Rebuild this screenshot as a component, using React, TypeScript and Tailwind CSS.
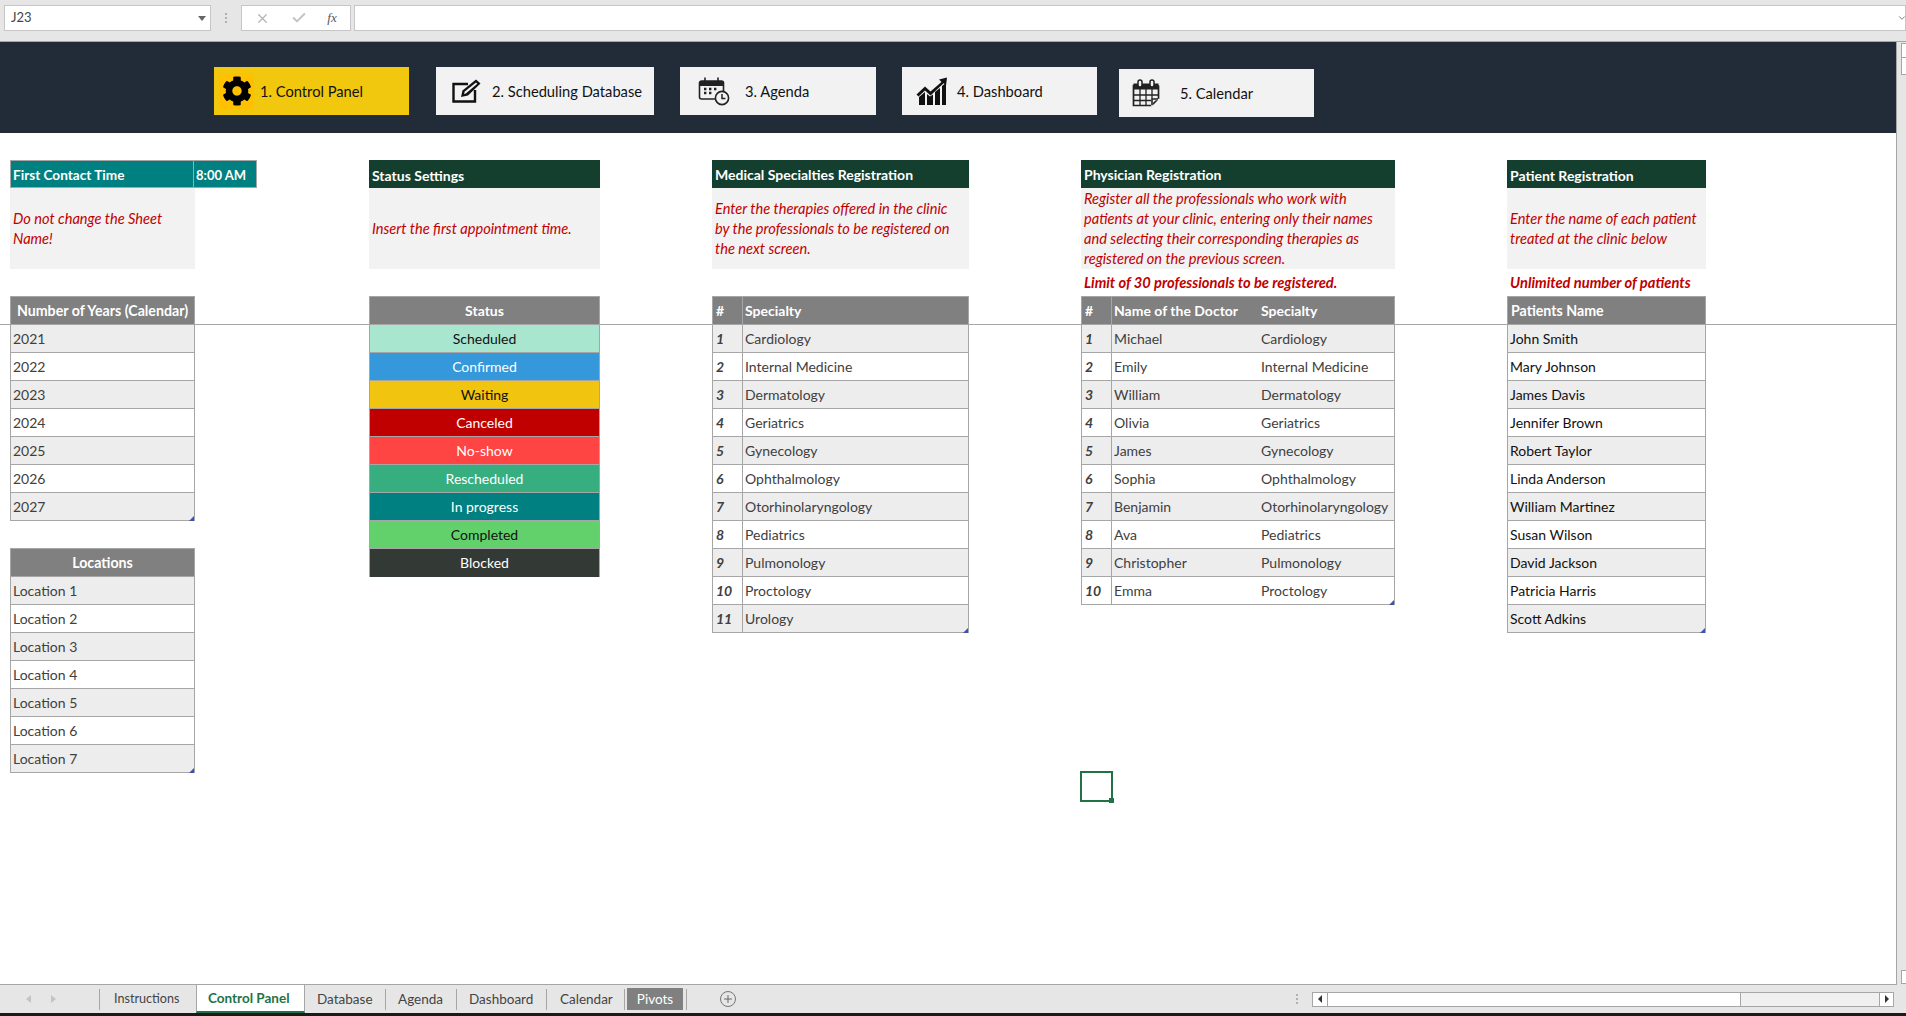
import { FaCog } from "react-icons/fa";
import { ChevronDown, Plus, X, Check } from "lucide-react";

const years = ["2021", "2022", "2023", "2024", "2025", "2026", "2027"];
const locations = ["Location 1", "Location 2", "Location 3", "Location 4", "Location 5", "Location 6", "Location 7"];
const specialties = [
  "Cardiology",
  "Internal Medicine",
  "Dermatology",
  "Geriatrics",
  "Gynecology",
  "Ophthalmology",
  "Otorhinolaryngology",
  "Pediatrics",
  "Pulmonology",
  "Proctology",
  "Urology",
];
const doctors = ["Michael", "Emily", "William", "Olivia", "James", "Sophia", "Benjamin", "Ava", "Christopher", "Emma"];
const patients = [
  "John Smith",
  "Mary Johnson",
  "James Davis",
  "Jennifer Brown",
  "Robert Taylor",
  "Linda Anderson",
  "William Martinez",
  "Susan Wilson",
  "David Jackson",
  "Patricia Harris",
  "Scott Adkins",
];
const statuses = [
  { label: "Scheduled", cls: "bg-[#a8e6cf] text-[#111]" },
  { label: "Confirmed", cls: "bg-[#3498db] text-white" },
  { label: "Waiting", cls: "bg-[#f1c40f] text-[#111]" },
  { label: "Canceled", cls: "bg-[#c00000] text-white" },
  { label: "No-show", cls: "bg-[#ff4444] text-white" },
  { label: "Rescheduled", cls: "bg-[#36ae7f] text-white" },
  { label: "In progress", cls: "bg-[#008080] text-white" },
  { label: "Completed", cls: "bg-[#63d16b] text-[#111]" },
  { label: "Blocked", cls: "bg-[#333a36] text-white" },
];

function EditIcon() {
  return (
    <svg width="29" height="24" viewBox="0 0 29 24" fill="none">
      <path d="M16 5H1.500v17.500h21.500V11" stroke="#111" strokeWidth="2.400" />
      <path d="M9 18l1.500-6.500L24 0.500l4.500 4L16 16.500z" fill="#111" />
      <path d="M12 15.200l0.800-2.700 11.200-9 1.300 1.200-11.200 9.500z" fill="#f2f2f2" />
    </svg>
  );
}

function AgendaIcon() {
  return (
    <svg width="32" height="29" viewBox="0 0 32 29" fill="none">
      <path d="M17 22H3.500a2 2 0 0 1-2-2V6a2 2 0 0 1 2-2h20a2 2 0 0 1 2 2v8" stroke="#222" strokeWidth="1.600" />
      <rect x="2" y="4" width="23" height="5" fill="#222" />
      <path d="M7 0.500v5M20 0.500v5" stroke="#222" strokeWidth="1.600" />
      <path d="M6 12h2.400M11 12h2.400M16 12h2.400M6 16h2.400M11 16h2.400" stroke="#222" strokeWidth="2.400" />
      <circle cx="24" cy="21" r="6.600" fill="#f2f2f2" stroke="#222" strokeWidth="1.600" />
      <path d="M24 17v4.400h3.400" stroke="#222" strokeWidth="1.500" />
    </svg>
  );
}

function ChartIcon() {
  return (
    <svg width="32" height="28" viewBox="0 0 32 28" fill="#111">
      <path d="M3 20l6-5v13H3zM11 17l3 2.600 3-2V28h-6zM19 15l5-4v17h-5zM26 9l4-3v22h-4z" />
      <path d="M0.500 17.500L9 9.500l5.500 5L25.500 5l-2.400-2.500L31 0.500 30 8.500l-2.400-2.300L14.500 18.500 9 13.600 2.500 19.600z" />
    </svg>
  );
}

function CalendarIcon() {
  return (
    <svg width="28" height="28" viewBox="0 0 28 28" fill="none">
      <path d="M26.500 6.500H1.500v20h18M26.500 6.500v13l-7 7" stroke="#222" strokeWidth="1.700" />
      <path d="M1.500 4.500h25v6h-25z" fill="#222" />
      <rect x="6" y="1" width="4" height="7" rx="2" fill="#f2f2f2" stroke="#222" strokeWidth="1.500" />
      <rect x="18" y="1" width="4" height="7" rx="2" fill="#f2f2f2" stroke="#222" strokeWidth="1.500" />
      <path d="M1.500 16h25M1.500 21.500h18M8 10v16.500M14 10v16.500M20 10v16.500" stroke="#222" strokeWidth="1.300" />
      <path d="M20 27v-6.500h7" stroke="#f2f2f2" strokeWidth="1.500" />
      <path d="M20 26v-6h6" stroke="#222" strokeWidth="1.500" />
    </svg>
  );
}

function NavButton({
  icon,
  label,
  iconBox,
  className,
}: {
  icon: React.ReactNode;
  label: string;
  iconBox: string;
  className: string;
}) {
  return (
    <div className={`flex h-[48px] w-[195px] shrink-0 items-center text-[14.700px] text-[#111] ${className}`}>
      <div className={`flex shrink-0 items-center ${iconBox}`}>{icon}</div>
      <span className="whitespace-nowrap">{label}</span>
    </div>
  );
}

function Corner() {
  return (
    <svg width="5" height="5" viewBox="0 0 5 5" className="absolute bottom-0 right-0">
      <path d="M5 0v5H0z" fill="#3f51b5" />
    </svg>
  );
}

function Heading({ text, raised }: { text: string; raised?: boolean }) {
  return (
    <div
      className={`flex h-[28px] items-end bg-[#143f2f] pl-[3px] text-[14px] font-bold text-white ${
        raised ? "pb-[3px]" : "pb-[2px]"
      }`}
    >
      {text}
    </div>
  );
}

function Hint({ lines }: { lines: string[] }) {
  return (
    <div className="flex h-[81px] flex-col justify-center bg-[#f2f2f2] pl-[3px] text-[14.600px] italic leading-[20px] text-[#c00000]">
      {lines.map((line) => (
        <div key={line} className="whitespace-nowrap">
          {line}
        </div>
      ))}
    </div>
  );
}

function Note({ text }: { text?: string }) {
  return (
    <div className="flex h-[27px] items-center pl-[3px] text-[14.700px] font-bold italic text-[#c00000]">{text}</div>
  );
}

function rowColor(i: number) {
  return i % 2 === 0 ? "bg-[#ededed]" : "bg-white";
}

function SimpleTable({
  title,
  rows,
  text = "text-[#404040]",
  left,
}: {
  title: string;
  rows: string[];
  text?: string;
  left?: boolean;
}) {
  return (
    <div className="relative border-x border-t border-[#a6a6a6]">
      <div
        className={`flex h-[28px] items-center border-b border-[#a6a6a6] bg-[#808080] text-[14.200px] font-bold text-white ${
          left ? "pl-[3px]" : "justify-center"
        }`}
      >
        {title}
      </div>
      {rows.map((row, i) => (
        <div
          key={row}
          className={`flex h-[28px] items-center border-b border-[#a6a6a6] pl-[2px] text-[14px] ${text} ${rowColor(i)}`}
        >
          {row}
        </div>
      ))}
      <Corner />
    </div>
  );
}

function NumberedTable({ rows, extra }: { rows: string[]; extra?: string[] }) {
  return (
    <div className="relative border-x border-t border-[#a6a6a6]">
      <div className="flex h-[28px] items-center border-b border-[#a6a6a6] bg-[#808080] text-[14px] font-bold text-white">
        <div className="flex h-full w-[30px] shrink-0 items-center border-r border-[#a6a6a6] pl-[3px]">#</div>
        {extra ? (
          <>
            <div className="w-[149px] shrink-0 pl-[2px]">Name of the Doctor</div>
            <div>Specialty</div>
          </>
        ) : (
          <div className="pl-[2px]">Specialty</div>
        )}
      </div>
      {rows.map((row, i) => (
        <div
          key={row}
          className={`flex h-[28px] items-center border-b border-[#a6a6a6] text-[14px] text-[#404040] ${rowColor(i)}`}
        >
          <div className="flex h-full w-[30px] shrink-0 items-center border-r border-[#a6a6a6] pl-[3px] font-bold italic">
            {i + 1}
          </div>
          {extra ? (
            <>
              <div className="w-[149px] shrink-0 pl-[2px]">{row}</div>
              <div>{extra[i]}</div>
            </>
          ) : (
            <div className="pl-[2px]">{row}</div>
          )}
        </div>
      ))}
      <Corner />
    </div>
  );
}

function FormulaBar() {
  return (
    <div className="flex h-[42px] shrink-0 items-start border-b border-[#a6a6a6] bg-[#e6e6e6] pl-[4px] pt-[5px]">
      <div className="flex h-[26px] w-[207px] items-center justify-between border border-[#c6c6c6] bg-white pl-[6px] pr-[4px] text-[13px] text-[#444]">
        J23
        <svg width="8" height="5" viewBox="0 0 8 5">
          <path d="M0 0h8L4 5z" fill="#666" />
        </svg>
      </div>
      <div className="flex h-[26px] w-[30px] flex-col items-center justify-center gap-[2px]">
        <i className="h-[2px] w-[2px] bg-[#b0b0b0]" />
        <i className="h-[2px] w-[2px] bg-[#b0b0b0]" />
        <i className="h-[2px] w-[2px] bg-[#b0b0b0]" />
      </div>
      <div className="flex h-[26px] w-[110px] items-center justify-around border border-[#c6c6c6] bg-white px-[3px]">
        <X size={15} className="text-[#b4b4b4]" />
        <Check size={16} strokeWidth={3} className="text-[#c4c4c4]" />
        <span className="font-['Liberation_Serif',serif] text-[13px] italic text-[#555]">fx</span>
      </div>
      <div className="ml-[3px] flex h-[26px] flex-1 items-center justify-end border border-[#c6c6c6] bg-white">
        <ChevronDown size={10} className="-mr-[2px] text-[#666]" />
      </div>
    </div>
  );
}

function Tab({ label, className }: { label: string; className: string }) {
  return (
    <div className={`flex h-[21px] shrink-0 items-center border-r border-[#a6a6a6] text-[13.500px] text-[#444] ${className}`}>
      {label}
    </div>
  );
}

function SheetTabs() {
  return (
    <div className="flex h-[28px] shrink-0 items-center bg-[#e6e6e6]">
      <div className="flex h-[21px] w-[100px] shrink-0 items-center gap-[20px] border-r border-[#a6a6a6] pl-[26px]">
        <svg width="5" height="8" viewBox="0 0 5 8">
          <path d="M5 0v8L0 4z" fill="#c4c4c4" />
        </svg>
        <svg width="5" height="8" viewBox="0 0 5 8">
          <path d="M0 0v8l5-4z" fill="#c4c4c4" />
        </svg>
      </div>
      <Tab label="Instructions" className="w-[96px] border-r-0 pl-[14px] !text-[12.600px]" />
      <div className="flex h-[28px] w-[109px] shrink-0 items-center border-x border-[#a6a6a6] border-b-[2px] border-b-[#217346] bg-white pl-[11px] text-[13.500px] font-bold text-[#217346]">
        Control Panel
      </div>
      <Tab label="Database" className="w-[81px] pl-[12px]" />
      <Tab label="Agenda" className="w-[71px] pl-[12px]" />
      <Tab label="Dashboard" className="w-[90px] pl-[12px]" />
      <Tab label="Calendar" className="w-[78px] pl-[13px]" />
      <div className="ml-[2px] flex h-[22px] w-[56px] shrink-0 items-center justify-center bg-[#808080] text-[13.500px] text-white">
        Pivots
      </div>
      <div className="ml-[3px] h-[21px] w-px shrink-0 bg-[#a6a6a6]" />
      <div className="ml-[33px] flex h-[16px] w-[16px] shrink-0 items-center justify-center rounded-full border border-[#777]">
        <Plus size={12} className="text-[#666]" />
      </div>
      <div className="ml-[560px] flex flex-col gap-[2px]">
        <i className="h-[2px] w-[2px] bg-[#b0b0b0]" />
        <i className="h-[2px] w-[2px] bg-[#b0b0b0]" />
        <i className="h-[2px] w-[2px] bg-[#b0b0b0]" />
      </div>
      <div className="ml-[14px] flex h-[15px] w-[582px] shrink-0 border border-[#a6a6a6] bg-[#f0f0f0]">
        <div className="flex w-[15px] shrink-0 items-center justify-center border-r border-[#a6a6a6] bg-white">
          <svg width="4" height="8" viewBox="0 0 4 8">
            <path d="M4 0v8L0 4z" fill="#333" />
          </svg>
        </div>
        <div className="w-[413px] shrink-0 border-r border-[#a6a6a6] bg-white" />
        <div className="flex-1" />
        <div className="flex w-[14px] shrink-0 items-center justify-center border-l border-[#a6a6a6] bg-white">
          <svg width="4" height="8" viewBox="0 0 4 8">
            <path d="M0 0v8l4-4z" fill="#333" />
          </svg>
        </div>
      </div>
    </div>
  );
}

export default function App() {
  return (
    <div className="flex h-[1016px] w-[1906px] flex-col overflow-hidden bg-white font-['Lato','Liberation_Sans',sans-serif]">
      <FormulaBar />

      <div className="flex min-h-0 flex-1">
        <div className="relative min-w-0 flex-1 border-b border-r border-[#a6a6a6]">
          {/* Frozen pane line */}
          <div className="absolute left-0 right-0 top-[282px] h-px bg-[#a6a6a6]" />

          {/* Navigation band */}
          <div className="flex h-[91px] items-start bg-[#222b38] pl-[214px] pt-[25px]">
            <NavButton
              icon={
                <div className="flex h-[36px] w-[35px] items-center justify-center bg-[#ffc000]">
                  <FaCog size={30} color="#000" />
                </div>
              }
              iconBox="w-[46px] pl-[5px]"
              label="1. Control Panel"
              className="bg-[#f1c80d]"
            />
            <NavButton
              icon={<EditIcon />}
              iconBox="w-[56px] pl-[16px]"
              label="2. Scheduling Database"
              className="ml-[27px] !w-[218px] bg-[#f2f2f2]"
            />
            <NavButton
              icon={<AgendaIcon />}
              iconBox="w-[65px] pl-[18px]"
              label="3. Agenda"
              className="ml-[26px] !w-[196px] bg-[#f2f2f2]"
            />
            <NavButton
              icon={<ChartIcon />}
              iconBox="w-[55px] pl-[14px]"
              label="4. Dashboard"
              className="ml-[26px] bg-[#f2f2f2]"
            />
            <NavButton
              icon={<CalendarIcon />}
              iconBox="w-[61px] pl-[13px]"
              label="5. Calendar"
              className="ml-[22px] mt-[2px] bg-[#f2f2f2]"
            />
          </div>

          {/* Registration columns */}
          <div className="relative flex items-start pl-[10px] pt-[27px]">
            <div className="w-[185px] shrink-0">
              <div className="flex h-[28px] w-[247px] border border-[#a6a6a6] bg-[#008080] font-bold text-white">
                <div className="flex w-[183px] shrink-0 items-end border-r border-[#a6a6a6] pb-[2px] pl-[2px] text-[13.600px]">
                  First Contact Time
                </div>
                <div className="flex items-end pb-[2px] pl-[2px] text-[13px]">8:00 AM</div>
              </div>
              <Hint lines={["Do not change the Sheet", "Name!"]} />
              <Note />
              <SimpleTable title="Number of Years (Calendar)" rows={years} />
              <div className="h-[27px]" />
              <SimpleTable title="Locations" rows={locations} />
            </div>

            <div className="ml-[174px] w-[231px] shrink-0">
              <Heading text="Status Settings" />
              <Hint lines={["Insert the first appointment time."]} />
              <Note />
              <div className="relative border-x border-t border-[#a6a6a6]">
                <div className="flex h-[28px] items-center justify-center border-b border-[#a6a6a6] bg-[#808080] text-[14px] font-bold text-white">
                  Status
                </div>
                {statuses.map((status) => (
                  <div
                    key={status.label}
                    className={`flex h-[28px] items-center justify-center border-b border-[#a6a6a6] text-[14px] last:border-b-transparent ${status.cls}`}
                  >
                    {status.label}
                  </div>
                ))}
              </div>
            </div>

            <div className="ml-[112px] w-[257px] shrink-0">
              <Heading text="Medical Specialties Registration" raised />
              <Hint
                lines={[
                  "Enter the therapies offered in the clinic",
                  "by the professionals to be registered on",
                  "the next screen.",
                ]}
              />
              <Note />
              <NumberedTable rows={specialties} />
            </div>

            <div className="ml-[112px] w-[314px] shrink-0">
              <Heading text="Physician Registration" raised />
              <Hint
                lines={[
                  "Register all the professionals who work with",
                  "patients at your clinic, entering only their names",
                  "and selecting their corresponding therapies as",
                  "registered on the previous screen.",
                ]}
              />
              <Note text="Limit of 30 professionals to be registered." />
              <NumberedTable rows={doctors} extra={specialties} />
            </div>

            <div className="ml-[112px] w-[199px] shrink-0">
              <Heading text="Patient Registration" />
              <Hint lines={["Enter the name of each patient", "treated at the clinic below"]} />
              <Note text="Unlimited number of patients" />
              <SimpleTable title="Patients Name" rows={patients} text="text-[#111]" left />
            </div>

            {/* Selected cell */}
            <div className="absolute left-[1080px] top-[638px] h-[31px] w-[33px] border-2 border-[#217346]">
              <div className="absolute -bottom-[3px] -right-[3px] h-[5px] w-[5px] bg-[#217346]" />
            </div>
          </div>
        </div>

        {/* Vertical scroll bar */}
        <div className="flex w-[9px] shrink-0 flex-col justify-between bg-[#e6e6e6] pb-[1px] pl-[4px] pt-[1px]">
          <div>
            <div className="h-[15px] border border-r-0 border-[#a6a6a6] bg-white" />
            <div className="h-[17px] border border-r-0 border-t-0 border-[#a6a6a6] bg-white" />
          </div>
          <div className="h-[14px] border border-r-0 border-[#a6a6a6] bg-white" />
        </div>
      </div>

      <SheetTabs />
      <div className="h-[3px] shrink-0 bg-[#1a1a1a]" />
    </div>
  );
}
